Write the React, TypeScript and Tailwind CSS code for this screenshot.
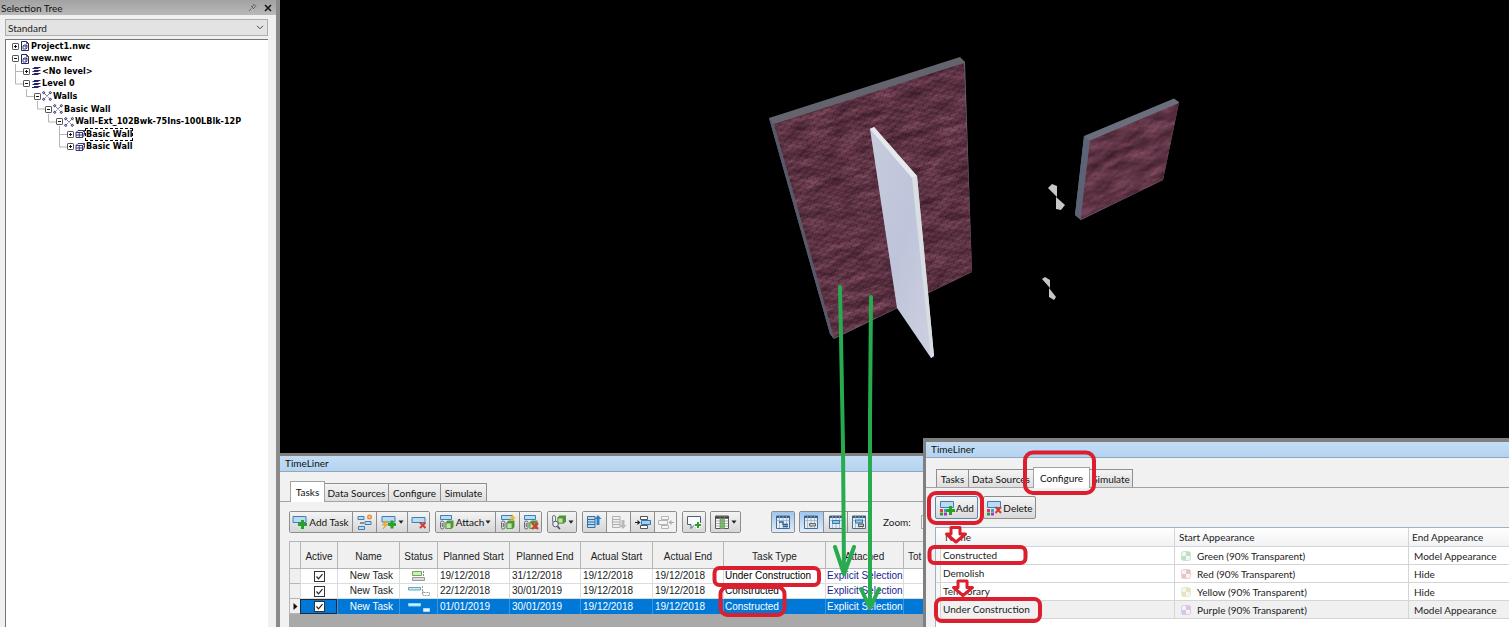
import React from "react";
import clsx from "clsx";

const UI = "font-['Lato','Open_Sans',sans-serif]";

/* ---------- tree icons ---------- */

function Toggle({ open }: { open: boolean }) {
  return (
    <svg viewBox="0 0 7 7" className="h-[7px] w-[7px] shrink-0" aria-hidden="true">
      <rect x="0.5" y="0.5" width="6" height="6" rx="0.6" fill="#fff" stroke="#555" />
      <path d={open ? "M2 3.5h3" : "M2 3.5h3M3.5 2v3"} stroke="#111" fill="none" />
    </svg>
  );
}

function TreeIcon({ kind }: { kind: string }) {
  return (
    <svg viewBox="0 0 10 10" className="h-[10px] w-[10px] shrink-0" fill="none" stroke="#25246b" aria-hidden="true">
      {kind === "file" && (
        <>
          <path d="M1.5 .5h5l2 2v7h-7z" fill="#fff" />
          <path d="M6.500 .5v2h2M3 5l1-1h3v3l-1 1H3zM3 5h3v3M6 5l1-1" strokeWidth=".8" />
        </>
      )}
      {kind === "level" && (
        <path d="M3 1.500h6.500M1.500 2.500h6M3 4.500h6.500M1.500 5.500h6M3 7.500h6.500M1 8.500h6.500" strokeWidth="1.200" />
      )}
      {kind === "group" && (
        <>
          <path d="M3 3l4 4M7 3L3 7" strokeDasharray="1 1" strokeWidth=".9" />
          <circle cx="1.700" cy="1.700" r="1" />
          <circle cx="8.300" cy="1.700" r="1" />
          <circle cx="1.700" cy="8.300" r="1" />
          <circle cx="8.300" cy="8.300" r="1" />
        </>
      )}
      {kind === "solid" && (
        <path d="M1 3.500L3 1.500h6.500v4L7.500 8.500H1zM1 3.500h6.500v5M7.500 3.500l2-2M1 6h6.500L9.500 4M4.200 3.500v5" strokeWidth=".9" />
      )}
    </svg>
  );
}

type Node = { label: string; kind: string; open: boolean; pad: string; focus?: boolean };

const nodes: Node[] = [
  { label: "Project1.nwc", kind: "file", open: false, pad: "pl-[6px]" },
  { label: "wew.nwc", kind: "file", open: true, pad: "pl-[6px]" },
  { label: "<No level>", kind: "level", open: false, pad: "pl-[17px]" },
  { label: "Level 0", kind: "level", open: true, pad: "pl-[17px]" },
  { label: "Walls", kind: "group", open: true, pad: "pl-[28px]" },
  { label: "Basic Wall", kind: "group", open: true, pad: "pl-[39px]" },
  { label: "Wall-Ext_102Bwk-75Ins-100LBlk-12P", kind: "group", open: true, pad: "pl-[50px]" },
  { label: "Basic Wall", kind: "solid", open: false, pad: "pl-[61px]", focus: true },
  { label: "Basic Wall", kind: "solid", open: false, pad: "pl-[61px]" },
];

function SelectionTree() {
  return (
    <aside className="flex w-[280px] shrink-0 flex-col border-r-4 border-[#8a8a8a] bg-[#f0f0f0]">
      <header className="flex h-[15px] items-center justify-between bg-linear-to-b from-[#a2a2a2] to-[#b9b9b9] pl-[1px] pr-1">
        <h2 className="text-[10px] leading-[14px] text-[#111]">Selection Tree</h2>
        <div className="flex items-center gap-[7px]">
          <button aria-label="Pin" className="block">
            <svg viewBox="0 0 9 9" className="h-[9px] w-[9px]" fill="#ddd" stroke="#555" strokeWidth=".8">
              <path d="M1 8l2.500-2.500M3 3l3 3M4 4l2-2.500M5.500 5.500l2-2M5.500 1l2.700 2.700" />
            </svg>
          </button>
          <button aria-label="Close" className="block">
            <svg viewBox="0 0 8 8" className="h-2 w-2" stroke="#111" strokeWidth="1.500">
              <path d="M1 1l6 6M7 1L1 7" />
            </svg>
          </button>
        </div>
      </header>
      <div className="relative mx-[5px] mr-2 mt-1">
        <select
          aria-label="Tree view"
          className="block h-[17px] w-full appearance-none border border-[#adadad] bg-[#e3e3e3] pl-[2px] text-[10px] leading-[14px] text-[#222]"
        >
          <option>Standard</option>
        </select>
        <svg viewBox="0 0 8 5" className="pointer-events-none absolute right-1 top-[6px] h-[5px] w-2" fill="none" stroke="#444">
          <path d="M1 .8l3 3 3-3" />
        </svg>
      </div>
      <div className="ml-[5px] mr-[8px] mt-[3px] flex-1 border-l border-t border-[#777] bg-white">
        <ul className="relative grid h-[113px] auto-rows-fr">
          <li aria-hidden="true" className="pointer-events-none absolute inset-0">
            <svg className="h-full w-full" fill="none" stroke="#b5b5b5">
              <path d="M9.500 24v20h9M9.500 31.500h9M20.500 49v7.500h9M31.500 61v8h9M42.500 74v8h9M53.500 86v21h9M53.500 94.500h9" />
            </svg>
          </li>
          {nodes.map((n, i) => (
            <li key={i} className={clsx("relative flex min-h-0 items-center gap-[1px]", n.pad)}>
              <Toggle open={n.open} />
              <TreeIcon kind={n.kind} />
              <span
                className={clsx(
                  "font-['DejaVu_Sans_Condensed','DejaVu_Sans',sans-serif] text-[9px] font-bold leading-[11px] whitespace-nowrap text-black",
                  n.focus && "outline-1 outline-dashed outline-black"
                )}
              >
                {n.label}
              </span>
            </li>
          ))}
        </ul>
      </div>
    </aside>
  );
}

/* ---------- 3D scene ---------- */

function Scene() {
  return (
    <svg className="absolute inset-0 h-full w-full overflow-visible" role="img" aria-label="Wall models">
      <defs>
        <filter id="grain" x="0" y="0" width="100%" height="100%" colorInterpolationFilters="sRGB">
          <feTurbulence type="fractalNoise" baseFrequency="0.04 0.13" numOctaves="4" seed="7" />
          <feColorMatrix values="0.38 0 0 0 0.19  0.26 0 0 0 0.08  0.3 0 0 0 0.13  0 0 0 0 1" />
        </filter>
        <pattern id="bricks" width="11" height="6" patternUnits="userSpaceOnUse">
          <path d="M0 .5h11M0 3.500h11" stroke="#35141f" strokeWidth=".6" opacity=".35" />
          <path d="M3 1v2M8.500 4v2" stroke="#241019" strokeWidth="1.100" opacity=".6" />
          <path d="M7 2h3M1 5h3" stroke="#a27486" strokeWidth=".7" opacity=".35" />
        </pattern>
        <pattern id="bands" width="60" height="34" patternUnits="userSpaceOnUse">
          <path d="M0 4h34M20 15h40M5 27h28" stroke="#3a1320" strokeWidth="4" opacity=".28" />
        </pattern>
        <clipPath id="wallA">
          <path d="M494 124L684 63L692 272L554 338z" />
        </clipPath>
        <clipPath id="wallB">
          <path d="M810 140.500L899 103L883 180L800.500 219.500z" />
        </clipPath>
        <linearGradient id="plaster" x1="0" y1="0" x2="1" y2="1">
          <stop offset="0" stopColor="#c7cbdd" />
          <stop offset=".5" stopColor="#bec4da" />
          <stop offset="1" stopColor="#cdd1e1" />
        </linearGradient>
      </defs>

      <path d="M489 118L680 57L685 62L692 272L554 339L550 334z" fill="#64646f" />
      <path d="M489 118L494 124L554 339L550 334z" fill="#55596a" />
      <g clipPath="url(#wallA)">
        <g transform="rotate(-17 590 200)">
          <rect x="440" y="20" width="310" height="370" filter="url(#grain)" />
          <rect x="440" y="20" width="310" height="370" fill="url(#bands)" />
          <rect x="440" y="20" width="310" height="370" fill="url(#bricks)" />
        </g>
      </g>

      <path d="M590 129L594 127L637 176L654 356L651 358L617 308z" fill="url(#plaster)" />
      <path d="M590 129L594 127L637 176L632 178z" fill="#e6e8eb" />
      <path d="M632 178L637 176L654 356L651 358z" fill="#d9dee2" />

      <path d="M804 136L894 98.500L899 102L883 180L801 220L795 215z" fill="#6b6e7c" />
      <path d="M804 136L810 140.500L801 220L795 215z" fill="#5d6376" />
      <g clipPath="url(#wallB)">
        <g transform="rotate(-23 850 160)">
          <rect x="770" y="80" width="170" height="170" filter="url(#grain)" />
          <rect x="770" y="80" width="170" height="170" fill="url(#bands)" opacity=".6" />
          <rect x="770" y="80" width="170" height="170" fill="url(#bricks)" opacity=".4" />
        </g>
      </g>

      <g fill="#c6c6c6">
        <path d="M768 188l4-4 5 2v11zM776 197l9 8-4 5-5-1z" />
        <path d="M762 279l3-2 5 3v8zM769 288l7 9-2 3-5-3z" />
      </g>
    </svg>
  );
}

/* ---------- toolbar icons ---------- */

const BLUE = "#3f7fb5";
const SKY = "#b9dcf5";

function Icon({ name }: { name: string }) {
  return (
    <svg viewBox="0 0 16 16" className="h-4 w-4 shrink-0" fill="none" aria-hidden="true">
      {name === "add" && (
        <>
          <path d="M1 2.500h13v6H1z" fill={SKY} stroke={BLUE} />
          <path d="M10.500 6v9M6 10.500h9" stroke="#26a326" strokeWidth="3" />
        </>
      )}
      {name === "insert" && (
        <>
          <path d="M1 2.500h6v3H1zM8 7.500h6v3H8zM1.500 12.500h6v3h-6z" fill={SKY} stroke={BLUE} />
          <path d="M3 9h4" stroke="#334" />
          <circle cx="12.500" cy="3" r="2.500" fill="#f08a3c" />
          <circle cx="12.500" cy="3" r="1" fill="#fbd9a8" />
        </>
      )}
      {name === "auto" && (
        <>
          <path d="M1 2.500h13v5.500H1z" fill={SKY} stroke={BLUE} />
          <path d="M5 7l-4 4h3l-2 4 5-5H4.500L7 7z" fill="#f5b62c" stroke="#c98512" strokeWidth=".4" />
          <path d="M11 6.500v8M7 10.500h8" stroke="#26a326" strokeWidth="3" />
        </>
      )}
      {name === "delete" && (
        <>
          <path d="M1 3.500h13v5H1z" fill={SKY} stroke={BLUE} />
          <path d="M9 8.500l5.500 5.500M14.500 8.500L9 14" stroke="#d53a35" strokeWidth="2" />
        </>
      )}
      {(name === "attach" || name === "attachAuto" || name === "attachClear") && (
        <>
          <path d="M1.500 1.500h11v4h-11z" fill={SKY} stroke={BLUE} />
          <rect x="1.500" y="7" width="3.500" height="8" rx="1.700" stroke="#667" />
          <path d="M3.300 9v4" stroke="#667" />
          <path d="M6.500 8.500l2-2h6v6.500l-2 2H6.500z" fill="#4f963a" />
          <path d="M7 9h5v5.500H7z" fill="#bfe3a3" stroke="#4f963a" strokeWidth=".8" />
          {name === "attachAuto" && <path d="M12.500 0l1 2.500 2.500.8-2 1.200.5 2.500-2-1.700-2.500 1 1-2.300-1-2 2.200.4z" fill="#f5b62c" />}
          {name === "attachClear" && <path d="M9 9l6 6M15 9l-6 6" stroke="#d53a35" strokeWidth="2.200" />}
        </>
      )}
      {name === "find" && (
        <>
          <rect x="1.500" y="1.500" width="3" height="7" rx="1.500" stroke="#778" />
          <path d="M6.500 3.500l2-2h6.500v6l-2 2H6.500z" fill="#4f963a" />
          <path d="M7 4h5v5H7z" fill="#bfe3a3" stroke="#4f963a" strokeWidth=".8" />
          <circle cx="4.500" cy="10" r="2.800" fill="#e8f1f8" stroke="#556" />
          <path d="M6.500 12.500l2.500 2.500" stroke="#445" strokeWidth="1.600" />
        </>
      )}
      {name === "up" && (
        <>
          <path d="M1.500 2.500h7.500v11h-7.500zM1.500 5.500h7.500M1.500 8h7.500M1.500 10.500h7.500" fill={SKY} stroke="#3a6d99" />
          <path d="M12 1l3.500 4h-2v6h-3V5h-2z" fill="#2c82c9" />
        </>
      )}
      {name === "down" && (
        <>
          <path d="M1.500 2.500h7.500v11h-7.500zM1.500 5.500h7.500M1.500 8h7.500M1.500 10.500h7.500" fill="#eee" stroke="#b0b0b0" />
          <path d="M12 15l3.500-4h-2V6h-3v5h-2z" fill="#b9b9b9" />
        </>
      )}
      {name === "indent" && (
        <>
          <path d="M5.500 2.500h7v3h-7zM5.500 11.500h7v3h-7z" fill="#fff" stroke="#555" />
          <path d="M6.500 6.500h9v4h-9z" fill="#9fd0f5" stroke="#2f78b5" />
          <path d="M0 8.500h4" stroke="#222" />
          <path d="M2.500 6L5.500 8.500l-3 2.500z" fill="#222" />
        </>
      )}
      {name === "outdent" && (
        <>
          <path d="M3.500 2.500h7v3h-7zM3.500 11.500h7v3h-7zM.5 6.500h9v4h-9z" fill="#f5f5f5" stroke="#b5b5b5" />
          <path d="M11 8.500h5" stroke="#aaa" />
          <path d="M13.500 6l-3 2.500 3 2.500z" fill="#aaa" />
        </>
      )}
      {name === "comment" && (
        <>
          <path d="M1.500 2.500h13v8H9l-4 4v-4H1.500z" fill="#f8fbfd" stroke="#4c6272" />
          <path d="M12 7.500v7M8.500 11h7" stroke="#fff" strokeWidth="4" />
          <path d="M12 8v6M9 11h6" stroke="#26a326" strokeWidth="2" />
        </>
      )}
      {name === "columns" && (
        <>
          <path d="M1.500 2h13v12.500h-13z" fill="#fff" stroke="#555" />
          <path d="M1.500 3.500h13" stroke="#444" strokeWidth="2.500" />
          <path d="M6 5h4.500v9.500H6z" fill="#75c963" />
          <path d="M6 2v12M10.500 2v12M1.500 7h13M1.500 9.500h13M1.500 12h13" stroke="#7b8b7b" strokeWidth=".7" />
        </>
      )}
      {name.startsWith("gantt") && (
        <>
          <path d="M1.500 2h13v12.500h-13z" fill="#e3edf6" stroke="#4d6a88" />
          <path d="M1.500 3h13" stroke="#3c5d80" strokeWidth="2" />
          <path d="M4.500 2v12M8 2v12M11.500 2v12M1.500 6.500h13" stroke="#92abc4" strokeWidth=".7" />
          {name === "ganttLines" && <path d="M4 8h4v2.500h5M8 12.500h5" stroke="#2f5f93" strokeWidth="1.300" />}
          {name === "ganttPlan" && <path d="M6.500 9.500h6v2.500h-6z" fill="#c7c7c7" stroke="#666" />}
          {name === "ganttActual" && <path d="M4.500 6.500h7v3h-7z" fill="#8ec8f0" stroke="#3478ad" />}
          {name === "ganttBoth" && (
            <>
              <path d="M4.500 6h7v3h-7z" fill="#8ec8f0" stroke="#3478ad" />
              <path d="M7.500 10h5v2.500h-5z" fill="#c7c7c7" stroke="#555" />
            </>
          )}
        </>
      )}
      {(name === "typeAdd" || name === "typeDelete") && (
        <>
          <path d="M1.500 1.500h13v6h-13z" fill={SKY} stroke={BLUE} />
          <path d="M1 9h3v3H1z" fill="#e33946" />
          <path d="M5 9h3v3H5z" fill="#37a2d8" />
          <path d="M1 12.500h3v3H1z" fill="#259b34" />
          <path d="M5 12.500h3v3H5z" fill="#9b3bc2" />
          {name === "typeAdd" ? (
            <path d="M11.500 6v9M7 10.500h9" stroke="#26a326" strokeWidth="3" />
          ) : (
            <path d="M9.500 7l5.500 6M15 7l-5.500 6" stroke="#d53a35" strokeWidth="2" />
          )}
        </>
      )}
    </svg>
  );
}

function Caret() {
  return (
    <svg viewBox="0 0 6 4" className="h-1 w-[6px] shrink-0" aria-hidden="true">
      <path d="M.5 .5h5L3 3.700z" fill="#222" />
    </svg>
  );
}

type Tool = { icon: string; label: string; text?: string; caret?: boolean; w: string; active?: boolean; off?: boolean };

const toolGroups: { gap: string; tools: Tool[] }[] = [
  {
    gap: "",
    tools: [
      { icon: "add", label: "Add Task", text: "Add Task", w: "w-[63px]" },
      { icon: "insert", label: "Insert Task", w: "w-6" },
      { icon: "auto", label: "Auto-Add Tasks", caret: true, w: "w-[31px]" },
      { icon: "delete", label: "Delete Task", w: "w-[23px]" },
    ],
  },
  {
    gap: "ml-[5px]",
    tools: [
      { icon: "attach", label: "Attach", text: "Attach", caret: true, w: "w-[60px]" },
      { icon: "attachAuto", label: "Auto-Attach Using Rules", w: "w-6" },
      { icon: "attachClear", label: "Clear Attachment", w: "w-[23px]" },
    ],
  },
  { gap: "ml-[5px]", tools: [{ icon: "find", label: "Find Items", caret: true, w: "w-[30px]" }] },
  {
    gap: "ml-[5px]",
    tools: [
      { icon: "up", label: "Move Up", w: "w-6" },
      { icon: "down", label: "Move Down", w: "w-6", off: true },
      { icon: "indent", label: "Indent", w: "w-6" },
      { icon: "outdent", label: "Outdent", w: "w-[23px]", off: true },
    ],
  },
  { gap: "ml-[5px]", tools: [{ icon: "comment", label: "Add Comment", w: "w-6" }] },
  { gap: "ml-1", tools: [{ icon: "columns", label: "Columns", caret: true, w: "w-[31px]" }] },
  { gap: "ml-[30px]", tools: [{ icon: "ganttLines", label: "Show or Hide Gantt Chart", w: "w-6", active: true }] },
  {
    gap: "ml-1",
    tools: [
      { icon: "ganttPlan", label: "Show Planned Dates", w: "w-6", active: true },
      { icon: "ganttActual", label: "Show Actual Dates", w: "w-6" },
      { icon: "ganttBoth", label: "Show Planned vs Actual", w: "w-[23px]" },
    ],
  },
];

function ToolGroup({ gap, tools }: { gap: string; tools: Tool[] }) {
  return (
    <div className={clsx("flex shrink-0 overflow-hidden rounded-[2px] border border-[#8d8d8d]", gap)}>
      {tools.map((t, i) => (
        <button
          key={t.label}
          aria-label={t.label}
          disabled={t.off}
          className={clsx(
            "box-border flex h-5 items-center justify-center gap-[1px] whitespace-nowrap text-[10px] leading-[14px] text-[#111]",
            t.w,
            i > 0 && "border-l border-[#8d8d8d]",
            i === 0 && "-ml-px",
            i === tools.length - 1 && "-mr-px",
            t.active ? "bg-linear-to-b from-[#9fc6ee] to-[#deedfb]" : t.off ? "bg-[#f1f1f1]" : "bg-linear-to-b from-[#f4f4f4] to-[#d6d6d6]"
          )}
        >
          <Icon name={t.icon} />
          {t.text && <span>{t.text}</span>}
          {t.caret && <Caret />}
        </button>
      ))}
    </div>
  );
}

/* ---------- shared panel parts ---------- */

function TitleBar() {
  return (
    <h2 className="h-4 border-b border-[#93a8bd] bg-linear-to-b from-[#c4ddf5] to-[#b4d3f0] pl-[5px] text-[10px] leading-[14px] text-[#111]">
      TimeLiner
    </h2>
  );
}

type Tab = { label: string; w: string };

function Tabs({ tabs, current }: { tabs: Tab[]; current: string }) {
  return (
    <div role="tablist" className="flex items-end border-b border-[#a3a3a3] px-[10px] pt-[9px]">
      {tabs.map((t, i) => {
        const on = t.label === current;
        const next = tabs[i + 1];
        return (
          <button
            key={t.label}
            role="tab"
            aria-selected={on}
            className={clsx(
              "shrink-0 whitespace-nowrap border-t text-[10px] leading-[14px] text-[#111]",
              t.w,
              on
                ? "-mb-px h-[21px] border-x border-[#a3a3a3] bg-white"
                : "h-[18px] border-[#8f8f8f] bg-linear-to-b from-[#f4f4f4] to-[#dedede]",
              !on && (!next || next.label !== current) && "border-r",
              !on && i === 0 && "border-l"
            )}
          >
            {t.label}
          </button>
        );
      })}
    </div>
  );
}

/* ---------- tasks panel ---------- */

const taskTabs: Tab[] = [
  { label: "Tasks", w: "w-[35px]" },
  { label: "Data Sources", w: "w-16" },
  { label: "Configure", w: "w-[52px]" },
  { label: "Simulate", w: "w-[46px]" },
];

const columns = [
  { label: "", w: "w-[11px]" },
  { label: "Active", w: "w-[37px]" },
  { label: "Name", w: "w-[62px]" },
  { label: "Status", w: "w-[38px]" },
  { label: "Planned Start", w: "w-[72px]" },
  { label: "Planned End", w: "w-[71px]" },
  { label: "Actual Start", w: "w-[72px]" },
  { label: "Actual End", w: "w-[71px]" },
  { label: "Task Type", w: "w-[102px]" },
  { label: "Attached", w: "w-[78px]" },
];

const tasks = [
  { status: "green", start: "19/12/2018", end: "31/12/2018", type: "Under Construction" },
  { status: "blue", start: "22/12/2018", end: "30/01/2019", type: "Constructed" },
  { status: "sel", start: "01/01/2019", end: "30/01/2019", type: "Constructed" },
];

function Status({ kind }: { kind: string }) {
  return (
    <svg viewBox="0 0 22 12" className="mx-auto block h-3 w-[22px]" fill="none" aria-label={"Status " + kind}>
      {kind === "green" && (
        <>
          <path d="M4.500 1.500h9v4h-9z" fill="#cdeebb" stroke="#73a55e" />
          <path d="M4.500 7.500h12v3h-12z" fill="#ddd" stroke="#999" />
          <path d="M15.500 1v6" stroke="#888" strokeDasharray="2 1" />
        </>
      )}
      {kind === "blue" && (
        <>
          <path d="M.5 2.500h12v2.500H.5z" fill="#c5edf8" stroke="#6aa5bd" />
          <path d="M14.500 1v8M15 6v4.500h6.500v-3H15" stroke="#999" strokeDasharray="2 1" />
        </>
      )}
      {kind === "sel" && (
        <>
          <path d="M.5 2.500h12v2.500H.5z" fill="#d5f3ff" stroke="#8ad0f2" />
          <path d="M15.500 7.500h6v3h-6z" fill="#e6f0fa" stroke="#b8d5ee" />
        </>
      )}
    </svg>
  );
}

function TasksPanel() {
  const head = "border-b border-l border-t border-[#b5b5b5] bg-[#f0f0f0] p-0 pt-[3px] font-normal whitespace-nowrap";
  return (
    <section className="min-w-0 shrink basis-[643px] overflow-hidden border-t-[3px] border-[#808080] bg-[#f1f1f1]">
      <TitleBar />
      <Tabs tabs={taskTabs} current="Tasks" />
      <div className="flex items-center pl-[9px] pt-[9px]">
        {toolGroups.map((g, i) => (
          <ToolGroup key={i} {...g} />
        ))}
        <label htmlFor="zoom" className="ml-[13px] shrink-0 text-[10px] leading-[14px] text-[#222]">
          Zoom:
        </label>
        <input id="zoom" className="ml-[10px] h-[14px] min-w-0 flex-1 border border-r-0 border-[#aaa] bg-[#f6f6f6]" />
      </div>
      <div className="ml-[9px] mt-2 overflow-hidden bg-[#a9a9a9] pb-[13px]">
        <table className="w-full table-fixed border-separate border-spacing-0 font-['Liberation_Sans',sans-serif] text-[10px] leading-[14px] text-[#222]">
          <thead>
            <tr className="h-7">
              {columns.map((c, i) => (
                <th key={i} className={clsx(head, c.w)}>
                  {c.label}
                </th>
              ))}
              <th className={clsx(head, "overflow-hidden pl-1 text-left")}>Tot</th>
            </tr>
          </thead>
          <tbody>
            {tasks.map((t, i) => {
              const sel = t.status === "sel";
              const cell = clsx("h-[15px] overflow-hidden border-l p-0 whitespace-nowrap", sel ? "border-[#3d93dd]" : "border-b border-[#dcdcdc]");
              const txt = clsx(cell, "pl-[2px]");
              return (
                <tr key={i} className={sel ? "bg-[#0078d7] text-white" : "bg-white"}>
                  <td className="h-[15px] border-b border-l border-[#b5b5b5] bg-[#f0f0f0] p-0">
                    {sel && (
                      <svg viewBox="0 0 5 7" className="mx-auto block h-[7px] w-[5px]">
                        <path d="M.5 0v7L4.500 3.500z" fill="#111" />
                      </svg>
                    )}
                  </td>
                  <td className={clsx(cell, sel && "outline-1 -outline-offset-1 outline-[#1c2a3a]")}>
                    <label className="relative mx-auto block h-[11px] w-[11px]">
                      <input
                        type="checkbox"
                        defaultChecked
                        aria-label={"Active " + (i + 1)}
                        className="block h-[11px] w-[11px] appearance-none border border-[#333] bg-white"
                      />
                      <svg viewBox="0 0 11 11" className="pointer-events-none absolute inset-0" fill="none" stroke="#222" strokeWidth="1.200">
                        <path d="M2.500 5.500l2 2.300 4-4.600" />
                      </svg>
                    </label>
                  </td>
                  <td className={clsx(cell, "pr-[6px] text-right")}>New Task</td>
                  <td className={cell}>
                    <Status kind={t.status} />
                  </td>
                  <td className={txt}>{t.start}</td>
                  <td className={txt}>{t.end}</td>
                  <td className={txt}>19/12/2018</td>
                  <td className={txt}>19/12/2018</td>
                  <td className={clsx(cell, "pl-[1px]", !sel && "text-black")}>{t.type}</td>
                  <td className={clsx(cell, "pl-[1px]", !sel && "text-[#1c1c8f]")}>Explicit Selection</td>
                  <td className={cell} />
                </tr>
              );
            })}
          </tbody>
        </table>
      </div>
    </section>
  );
}

/* ---------- configure panel ---------- */

const configTabs: Tab[] = [
  { label: "Tasks", w: "w-[33px]" },
  { label: "Data Sources", w: "w-16" },
  { label: "Configure", w: "w-[57px]" },
  { label: "Simulate", w: "w-[43px]" },
];

const types = [
  { name: "Constructed", color: "#9ad3a0", start: "Green (90% Transparent)", end: "Model Appearance" },
  { name: "Demolish", color: "#e0a3a3", start: "Red (90% Transparent)", end: "Hide" },
  { name: "Temporary", color: "#d9d99a", start: "Yellow (90% Transparent)", end: "Hide" },
  { name: "Under Construction", color: "#c5a5dc", start: "Purple (90% Transparent)", end: "Model Appearance" },
];

function ConfigurePanel() {
  const head = "border-b border-[#d2d6da] bg-linear-to-b from-white to-[#f1f2f4] p-0 text-left font-normal";
  const button =
    "flex h-[23px] items-center justify-center gap-[1px] rounded-[2px] border bg-linear-to-b from-[#f5f5f5] to-[#d9d9d9] text-[10px] leading-[14px] text-[#111]";
  return (
    <section className="min-w-0 flex-1 border-l-[3px] border-t-4 border-[#808080] bg-[#f1f1f1]">
      <TitleBar />
      <Tabs tabs={configTabs} current="Configure" />
      <div className="flex gap-[5px] pl-[9px] pt-2">
        <button className={clsx(button, "w-[43px] border-[#5f87ad]")}>
          <Icon name="typeAdd" />
          Add
        </button>
        <button className={clsx(button, "w-[53px] border-[#8d8d8d]")}>
          <Icon name="typeDelete" />
          Delete
        </button>
      </div>
      <div className="ml-[9px] mt-2 border-l border-t border-[#9fb2c3] bg-white pb-[8px]">
        <table className="w-full table-fixed border-separate border-spacing-0 text-[10px] leading-[14px] text-[#222]">
          <thead>
            <tr className="h-[19px]">
              <th className={clsx(head, "w-1")} />
              <th className={clsx(head, "w-[234px] pl-[5px]")}>Name</th>
              <th className={clsx(head, "w-[234px] border-l pl-1")}>Start Appearance</th>
              <th className={clsx(head, "border-l pl-[3px]")}>End Appearance</th>
            </tr>
          </thead>
          <tbody>
            {types.map((t, i) => {
              const cell = clsx("h-[18px] overflow-hidden border-b border-l border-[#d5d5d5] p-0 whitespace-nowrap", i === 3 && "bg-[#f0f0f0]");
              return (
                <tr key={t.name}>
                  <td className="h-[18px] border-b border-[#d5d5d5] bg-[#f6f6f6] p-0" />
                  <td className={clsx(cell, "pb-[2px] pl-[2px]")}>{t.name}</td>
                  <td className={cell}>
                    <span className="flex items-center gap-[6px] pl-[6px]">
                      <svg viewBox="0 0 10 10" className="h-[10px] w-[10px] shrink-0" aria-hidden="true">
                        <rect x=".5" y=".5" width="9" height="9" rx="2" fill="#f4f4f4" stroke={t.color} strokeOpacity=".5" />
                        <path d="M5 1h4v4H5zM1 5h4v4H1z" fill={t.color} fillOpacity=".6" />
                      </svg>
                      {t.start}
                    </span>
                  </td>
                  <td className={clsx(cell, "pl-[5px]")}>{t.end}</td>
                </tr>
              );
            })}
          </tbody>
        </table>
      </div>
    </section>
  );
}

/* ---------- hand-drawn markup over the window ---------- */

function Markup() {
  return (
    <svg className="pointer-events-none absolute inset-0 h-full w-full" fill="none" strokeLinejoin="round" strokeLinecap="round" aria-hidden="true">
      <g stroke="#dc1f2e" strokeWidth="4">
        <rect x="745" y="452.500" width="69" height="40.500" rx="8" />
        <rect x="649" y="493" width="53" height="30" rx="7" />
        <rect x="649.500" y="547" width="96" height="16" rx="5" />
        <rect x="656" y="599" width="104" height="22" rx="6" />
        <rect x="434.500" y="568" width="104.500" height="17" rx="5" />
        <rect x="440.500" y="587" width="64" height="28" rx="7" />
      </g>
      <g stroke="#dc1f2e" strokeWidth="3" fill="#fff">
        <path d="M671 527.500h9v6.500h5.500l-9.500 8-9.500-8h4.500z" />
        <path d="M678 581h9v6.500h5.500l-9.500 8-9.500-8h4.500z" />
      </g>
      <g stroke="#27ab4e" strokeWidth="4">
        <path d="M560 287l1 50 2 110 1 125M555 547l9 27 10-27" />
        <path d="M591 297l-1 120v190M581 589l9 19 9-19" />
      </g>
    </svg>
  );
}

export default function App() {
  return (
    <div className={clsx("flex h-screen overflow-hidden bg-black", UI)}>
      <SelectionTree />
      <main className="relative flex min-w-0 flex-1 flex-col">
        <div className="relative flex-1">
          <Scene />
        </div>
        <div className="relative flex items-end">
          <TasksPanel />
          <ConfigurePanel />
        </div>
        <Markup />
      </main>
    </div>
  );
}
